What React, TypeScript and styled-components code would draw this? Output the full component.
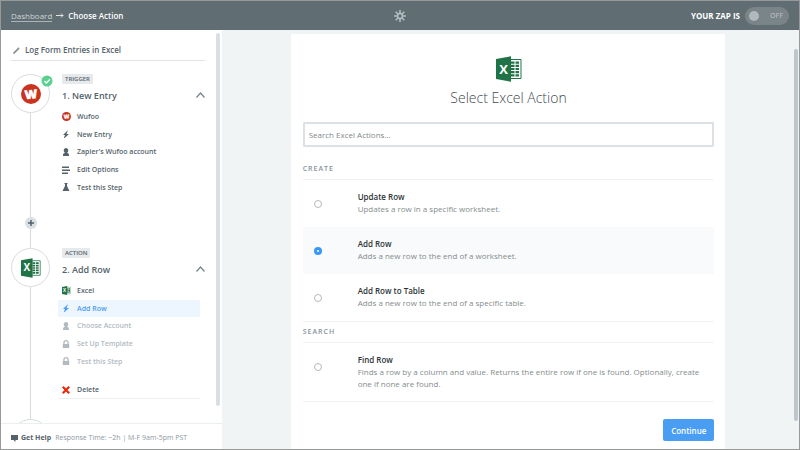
import React from "react";
import styled, { createGlobalStyle, css } from "styled-components";

const Global = createGlobalStyle`
  *, *::before, *::after { box-sizing: border-box; }
  html, body { margin: 0; padding: 0; }
  body { font-family: "Open Sans", "Noto Sans", sans-serif; font-size: 8px; line-height: 12px; color: #54626a; background: #fff; }
  button, input { font-family: inherit; font-size: inherit; color: inherit; }
  button { padding: 0; border: 0; background: none; text-align: left; cursor: pointer; }
  svg { display: block; flex: none; }
`;

const Page = styled.div`
  display: flex;
  flex-direction: column;
  height: 100vh;
  border: 1px solid #989a99;
  overflow: hidden;
`;

const TopBar = styled.header`
  flex: none;
  display: grid;
  grid-template-columns: 1fr auto 1fr;
  align-items: center;
  height: 29px;
  padding: 0 10px;
  background: #606d72;
  color: #fff;
`;

const Crumbs = styled.nav`
  display: flex;
  align-items: center;
  gap: 4px;
  font-weight: 600;
`;

const CrumbLink = styled.a`
  color: #ccd4d8;
  font-weight: 400;
  text-decoration: none;
  border-bottom: 1px solid #aab3b7;
  line-height: 11px;
`;

const ZapState = styled.div`
  display: flex;
  align-items: center;
  justify-content: flex-end;
  gap: 5px;
  font-weight: 700;
`;

const Toggle = styled.button`
  display: flex;
  align-items: center;
  justify-content: space-between;
  width: 44px;
  height: 18px;
  padding: 0 6px 0 4px;
  border-radius: 9px;
  background: #7a8589;
  color: #b2b9bc;
  font-size: 7px;
  font-weight: 600;
`;

const Knob = styled.span`
  width: 10px;
  height: 10px;
  border-radius: 50%;
  background: #b2b9bc;
`;

const Body = styled.div`
  flex: 1;
  display: flex;
  min-height: 0;
`;

const Sidebar = styled.aside`
  flex: 0 0 221px;
  display: flex;
  flex-direction: column;
  background: #fff;
`;

const SideScroll = styled.div`
  flex: 1;
  display: flex;
  min-height: 0;
  overflow: hidden;
  padding-right: 2px;
`;

const SideContent = styled.div`
  flex: 1;
  padding: 10px 11px 0 10px;
`;

const ScrollThumb = styled.div<{ $wide?: boolean }>`
  flex: none;
  width: 4px;
  margin: 3px 0 17px;
  border-radius: 2px;
  background: #d9dfe2;
  ${(p) => p.$wide && css`margin: 19px 1px 28px 0; background: #bcc6cc;`}
`;

const ZapName = styled.h1`
  display: flex;
  align-items: center;
  gap: 5px;
  height: 21px;
  margin: 0 0 13px;
  padding: 0 0 0 2px;
  border-bottom: 1px solid #dfe3e5;
  font-size: 8px;
  font-weight: 600;
`;

const Step = styled.section`
  display: flex;
  gap: 8px;
`;

const Rail = styled.div`
  flex: none;
  display: flex;
  flex-direction: column;
  align-items: center;
  width: 39px;
`;

const AppCircle = styled.div`
  position: relative;
  flex: none;
  display: flex;
  align-items: center;
  justify-content: center;
  width: 39px;
  height: 39px;
  border: 1px solid #d7dddf;
  border-radius: 50%;
`;

const CheckBadge = styled.span`
  position: absolute;
  top: 0;
  right: -4px;
`;

const Line = styled.div`
  flex: 1;
  width: 1px;
  background: #d5dbde;
`;

const StepBody = styled.div<{ $space: number }>`
  flex: 1;
  padding: 0 0 ${(p) => p.$space}px;
`;

const Tag = styled.span`
  display: block;
  width: fit-content;
  margin-left: 4px;
  padding: 0 3px;
  border-radius: 1px;
  background: #e6eaed;
  font-size: 6px;
  font-weight: 600;
  line-height: 10px;
`;

const StepHead = styled.button`
  display: flex;
  align-items: center;
  justify-content: space-between;
  width: 100%;
  height: 14px;
  margin: 4px 0 6px;
  padding-left: 4px;
`;

const StepTitle = styled.span`
  font-size: 9px;
  font-weight: 600;
`;

const Items = styled.ul`
  display: grid;
  grid-auto-rows: 1fr;
  min-height: 88px;
  margin: 0 5px 0 0;
  padding: 0;
  list-style: none;
`;

const tones = { normal: "#54626a", active: "#499df3", muted: "#b1bac0" };
type Tone = keyof typeof tones;

const Item = styled.button<{ $tone: Tone }>`
  display: grid;
  grid-template-columns: 9px 1fr;
  align-items: center;
  gap: 6px;
  width: 100%;
  height: 100%;
  padding-left: 4px;
  border-radius: 1px;
  font-size: 7px;
  font-weight: 600;
  color: ${(p) => tones[p.$tone]};
  background: ${(p) => (p.$tone === "active" ? "#edf5fe" : "transparent")};
`;

const DeleteRow = styled.div`
  height: 18px;
  margin: 11px 5px 0 0;
  border-bottom: 1px solid #eceff0;
`;

const AddStep = styled.button`
  display: flex;
  align-items: center;
  justify-content: center;
  width: 12px;
  height: 12px;
  border-radius: 50%;
  background: #d9dfe2;
`;

const Connector = styled.div`
  flex: none;
  width: 1px;
  height: 19px;
  background: #d5dbde;
`;

const HelpBar = styled.footer`
  flex: none;
  display: flex;
  align-items: center;
  gap: 4px;
  height: 26px;
  padding: 2px 0 0 10px;
  border-top: 1px solid #eceff0;
  font-size: 7px;
  color: #8d989e;
`;

const HelpButton = styled.button`
  display: flex;
  align-items: center;
  gap: 3px;
  font-weight: 700;
  color: #54626a;
`;

const Main = styled.main`
  flex: 1;
  display: flex;
  background: #f0f4f5;
`;

const CardArea = styled.div`
  flex: 1;
  display: flex;
  justify-content: center;
  padding-top: 4px;
`;

const Card = styled.form`
  display: flex;
  flex-direction: column;
  width: 76%;
  padding: 22px 11px 8px 12px;
  background: #fff;
`;

const CardTitle = styled.h2`
  margin: 6px 0 14px;
  font-size: 14px;
  font-weight: 300;
  line-height: 20px;
  text-align: center;
  color: #3f4a50;
`;

const Logo = styled.div`
  display: flex;
  justify-content: center;
`;

const Search = styled.input`
  width: 100%;
  height: 25px;
  padding: 0 4px;
  border: 2px solid #dbe1e4;
  border-radius: 1px;
  background: #fff;
  outline: 0;
  &::placeholder { color: #82898c; opacity: 1; }
`;

const Group = styled.fieldset`
  min-width: 0;
  margin: 0;
  padding: 0;
  border: 0;
  border-bottom: 1px solid #f0f3f4;
`;

const GroupName = styled.legend<{ $first?: boolean }>`
  width: 100%;
  padding: ${(p) => (p.$first ? "16px 0 5px" : "4px 0 5px")};
  border-bottom: 1px solid #f0f3f4;
  font-size: 7px;
  font-weight: 600;
  line-height: 11px;
  letter-spacing: 1px;
  color: #87929a;
`;

const Option = styled.label<{ $on?: boolean }>`
  display: flex;
  gap: 36px;
  min-height: 47px;
  padding: 11px;
  background: ${(p) => (p.$on ? "#f8fafc" : "transparent")};
`;

const Radio = styled.input`
  appearance: none;
  flex: none;
  width: 8px;
  height: 8px;
  margin: 9px 0 0;
  border: 1px solid #b5b9bb;
  border-radius: 50%;
  background: #fff;
  &:checked { border: 3px solid #3997fc; }
`;

const OptionText = styled.span`
  display: flex;
  flex-direction: column;
  color: #848d8c;
`;

const OptionName = styled.strong`
  font-weight: 600;
  color: #2d3436;
`;

const Continue = styled.button`
  align-self: flex-end;
  height: 22px;
  margin-top: 17px;
  padding: 0 8px;
  border-radius: 2px;
  background: #499df3;
  color: #fff;
  font-weight: 600;
`;

const Excel = ({ size }: { size: number }) => (
  <svg width={size} height={size} viewBox="0 0 26 26" aria-hidden="true">
    <path d="M14 3.5h11v19H14z" fill="#fff" stroke="#207347" strokeWidth="1" />
    <path d="M15 5.500h3.500v2.200H15zM19.500 5.500H23v2.200h-3.500zM15 8.700h3.500v2.200H15zM19.500 8.700H23v2.200h-3.500zM15 11.900h3.500v2.200H15zM19.500 11.900H23v2.200h-3.500zM15 15.100h3.500v2.200H15zM19.500 15.100H23v2.200h-3.500zM15 18.300h3.500v2.200H15zM19.500 18.300H23v2.200h-3.500z" fill="#207347" />
    <path d="M0 3 15 .3v25.4L0 23z" fill="#207347" />
    <text x="7.500" y="17.500" textAnchor="middle" fontSize="13" fontWeight="700" fill="#fff">X</text>
  </svg>
);

const Wufoo = ({ size }: { size: number }) => (
  <svg width={size} height={size} viewBox="0 0 20 20" aria-hidden="true">
    <circle cx="10" cy="10" r="10" fill="#c9331f" />
    <text x="10" y="14.500" textAnchor="middle" fontSize="12" fontWeight="800" fill="#fff" stroke="#fff" strokeWidth=".6" transform="rotate(-6 10 10)">W</text>
  </svg>
);

const glyphs: Record<string, React.ReactNode> = {
  bolt: <path d="M6 0 1 5h2L1.500 9 7 4H4.500z" />,
  user: <path d="M4 0a2.200 2.400 0 0 1 1.500 4.200L5.200 5C6.800 5.300 7 6 7 8H1c0-2 .2-2.700 1.800-3l-.3-.8A2.200 2.400 0 0 1 4 0z" />,
  lines: <path d="M0 .5h7v1.500H0zM0 3.500h8V5H0zM0 6.500h6V8H0z" />,
  flask: <path d="M2.500 0h3v1H5v2l2.500 5h-7L3 3V1h-.5z" />,
  lock: <path fillRule="evenodd" d="M1.300 4V2.700a2.700 2.700 0 0 1 5.400 0V4h.5v4H.8V4zm1.300 0h2.800V2.700a1.400 1.400 0 0 0-2.800 0z" />,
};

const Glyph = ({ name }: { name: string }) => (
  <svg width="8" height="8" viewBox="0 0 8 8" fill="currentColor" aria-hidden="true">{glyphs[name]}</svg>
);

const icon = (name: string) => {
  if (name === "wufoo") return <Wufoo size={9} />;
  if (name === "excel") return <Excel size={9} />;
  return <Glyph name={name} />;
};

const Chevron = () => (
  <svg width="9" height="6" viewBox="0 0 9 6" fill="none" stroke="#77838a" strokeWidth="1.200" aria-hidden="true"><path d="m.5 5.500 4-4.500 4 4.500" /></svg>
);

type Entry = { icon: string; text: string; tone?: Tone };

const triggerItems: Entry[] = [
  { icon: "wufoo", text: "Wufoo" },
  { icon: "bolt", text: "New Entry" },
  { icon: "user", text: "Zapier's Wufoo account" },
  { icon: "lines", text: "Edit Options" },
  { icon: "flask", text: "Test this Step" },
];

const actionItems: Entry[] = [
  { icon: "excel", text: "Excel" },
  { icon: "bolt", text: "Add Row", tone: "active" },
  { icon: "user", text: "Choose Account", tone: "muted" },
  { icon: "lock", text: "Set Up Template", tone: "muted" },
  { icon: "lock", text: "Test this Step", tone: "muted" },
];

const ItemList = ({ entries }: { entries: Entry[] }) => (
  <Items>
    {entries.map((e) => (
      <li key={e.text}>
        <Item type="button" $tone={e.tone ?? "normal"}>{icon(e.icon)}<span>{e.text}</span></Item>
      </li>
    ))}
  </Items>
);

const groups = [
  {
    name: "CREATE",
    options: [
      { name: "Update Row", text: "Updates a row in a specific worksheet." },
      { name: "Add Row", text: "Adds a new row to the end of a worksheet." },
      { name: "Add Row to Table", text: "Adds a new row to the end of a specific table." },
    ],
  },
  {
    name: "SEARCH",
    options: [
      { name: "Find Row", text: "Finds a row by a column and value. Returns the entire row if one is found. Optionally, create one if none are found." },
    ],
  },
];

export default function App() {
  const [selected, setSelected] = React.useState("Add Row");
  return (
    <Page>
      <Global />
      <TopBar>
        <Crumbs>
          <CrumbLink href="#">Dashboard</CrumbLink>
          <svg width="8" height="5" viewBox="0 0 8 5" fill="none" stroke="#e1e5e7" aria-hidden="true"><path d="M0 2.500h7M5 .5l2 2-2 2" /></svg>
          <span>Choose Action</span>
        </Crumbs>
        <svg width="12" height="12" viewBox="-6 -6 12 12" fill="none" stroke="#b4bdc1" strokeWidth="1.600" aria-hidden="true">
          <circle r="2.500" />
          <path d="M0-6v3.500M0 6V2.500M-6 0h3.500M6 0H2.500M-4.300-4.300l2.500 2.500M4.300 4.300 1.800 1.800M-4.300 4.300l2.500-2.500M4.300-4.300 1.800-1.800" />
        </svg>
        <ZapState>
          <span id="zap-state">YOUR ZAP IS</span>
          <Toggle type="button" role="switch" aria-checked="false" aria-labelledby="zap-state"><Knob />OFF</Toggle>
        </ZapState>
      </TopBar>
      <Body>
        <Sidebar>
          <SideScroll>
            <SideContent>
              <ZapName>
                <svg width="7" height="7" viewBox="0 0 7 7" fill="#879299" aria-hidden="true"><path d="M0 7l.5-1.800L5.500.3l1.200 1.200L1.800 6.500z" /></svg>
                Log Form Entries in Excel
              </ZapName>
              <Step>
                <Rail>
                  <AppCircle>
                    <Wufoo size={20} />
                    <CheckBadge>
                      <svg width="12" height="12" viewBox="0 0 12 12" aria-hidden="true"><circle cx="6" cy="6" r="5.500" fill="#57d18c" /><path d="m3.300 6 2 2L9 4.300" fill="none" stroke="#fff" strokeWidth="1.500" /></svg>
                    </CheckBadge>
                  </AppCircle>
                  <Line />
                </Rail>
                <StepBody $space={21}>
                  <Tag>TRIGGER</Tag>
                  <StepHead type="button" aria-expanded="true"><StepTitle>1. New Entry</StepTitle><Chevron /></StepHead>
                  <ItemList entries={triggerItems} />
                </StepBody>
              </Step>
              <Rail>
                <AddStep type="button" aria-label="Add a step">
                  <svg width="6" height="6" viewBox="0 0 6 6" stroke="#54626a" strokeWidth="1.500" aria-hidden="true"><path d="M3 0v6M0 3h6" /></svg>
                </AddStep>
                <Connector />
              </Rail>
              <Step>
                <Rail>
                  <AppCircle><Excel size={20} /></AppCircle>
                  <Line />
                </Rail>
                <StepBody $space={20}>
                  <Tag>ACTION</Tag>
                  <StepHead type="button" aria-expanded="true"><StepTitle>2. Add Row</StepTitle><Chevron /></StepHead>
                  <ItemList entries={actionItems} />
                  <DeleteRow>
                    <Item type="button" $tone="normal">
                      <svg width="8" height="8" viewBox="0 0 8 8" stroke="#e8290b" strokeWidth="2.200" aria-hidden="true"><path d="m.8.8 6.400 6.400M7.200.8.8 7.200" /></svg>
                      <span>Delete</span>
                    </Item>
                  </DeleteRow>
                </StepBody>
              </Step>
              <Rail><AppCircle /></Rail>
            </SideContent>
            <ScrollThumb />
          </SideScroll>
          <HelpBar>
            <HelpButton type="button">
              <svg width="7" height="8" viewBox="0 0 7 8" fill="currentColor" aria-hidden="true"><path d="M0 1h7v5H4.500v2l-2-2H0z" /></svg>
              Get Help
            </HelpButton>
            <span>Response Time: ~2h | M-F 9am-5pm PST</span>
          </HelpBar>
        </Sidebar>
        <Main>
          <CardArea>
            <Card onSubmit={(e) => e.preventDefault()}>
              <Logo><Excel size={26} /></Logo>
              <CardTitle>Select Excel Action</CardTitle>
              <Search type="search" aria-label="Search Excel Actions" placeholder="Search Excel Actions..." />
              {groups.map((g, i) => (
                <Group key={g.name}>
                  <GroupName $first={i === 0}>{g.name}</GroupName>
                  {g.options.map((o) => (
                    <Option key={o.name} $on={o.name === selected}>
                      <Radio type="radio" name="action" checked={o.name === selected} onChange={() => setSelected(o.name)} />
                      <OptionText><OptionName>{o.name}</OptionName><span>{o.text}</span></OptionText>
                    </Option>
                  ))}
                </Group>
              ))}
              <Continue type="submit">Continue</Continue>
            </Card>
          </CardArea>
          <ScrollThumb $wide />
        </Main>
      </Body>
    </Page>
  );
}
